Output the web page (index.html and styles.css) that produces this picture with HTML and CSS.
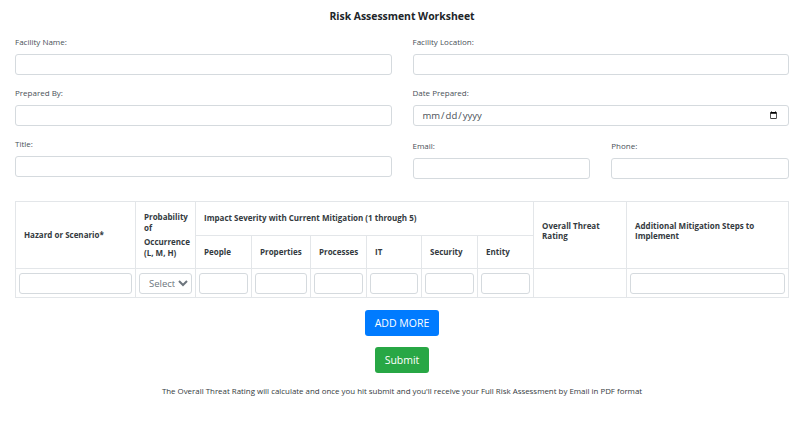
FILE: index.html
```html
<!DOCTYPE html>
<html lang="en">
<head>
    <meta charset="UTF-8">
    <meta name="viewport" content="width=device-width, initial-scale=1.0">
    <title>Risk Assessment Worksheet</title>
    <link rel="stylesheet" href="styles.css">
</head>
<body>
    <div class="container">
        <h1 class="page-title">Risk Assessment Worksheet</h1>

        <div class="form-grid">
            <div class="field">
                <label>Facility Name:</label>
                <input type="text">
            </div>
            <div class="field">
                <label>Facility Location:</label>
                <input type="text">
            </div>
            <div class="field">
                <label>Prepared By:</label>
                <input type="text">
            </div>
            <div class="field">
                <label>Date Prepared:</label>
                <input type="date">
            </div>
            <div class="field">
                <label>Title:</label>
                <input type="text">
            </div>
            <div class="split shifted">
                <div class="field">
                    <label>Email:</label>
                    <input type="email">
                </div>
                <div class="field">
                    <label>Phone:</label>
                    <input type="tel">
                </div>
            </div>
        </div>

        <table class="risk-table">
            <colgroup>
                <col style="width: 120px">
                <col style="width: 60px">
                <col style="width: 56px">
                <col style="width: 59px">
                <col style="width: 56px">
                <col style="width: 55px">
                <col style="width: 56px">
                <col style="width: 56px">
                <col style="width: 93px">
                <col>
            </colgroup>
            <thead>
                <tr>
                    <th rowspan="2">Hazard or Scenario*</th>
                    <th rowspan="2">Probability of<span class="sub">Occurrence (L, M, H)</span></th>
                    <th colspan="6">Impact Severity with Current Mitigation (1 through 5)</th>
                    <th rowspan="2" class="top">Overall Threat Rating</th>
                    <th rowspan="2" class="top">Additional Mitigation Steps to Implement</th>
                </tr>
                <tr>
                    <th>People</th>
                    <th>Properties</th>
                    <th>Processes</th>
                    <th>IT</th>
                    <th>Security</th>
                    <th>Entity</th>
                </tr>
            </thead>
            <tbody>
                <tr>
                    <td><input type="text"></td>
                    <td>
                        <select>
                            <option>Select</option>
                            <option>L</option>
                            <option>M</option>
                            <option>H</option>
                        </select>
                    </td>
                    <td><input type="text"></td>
                    <td><input type="text"></td>
                    <td><input type="text"></td>
                    <td><input type="text"></td>
                    <td><input type="text"></td>
                    <td><input type="text"></td>
                    <td></td>
                    <td><input type="text"></td>
                </tr>
            </tbody>
        </table>

        <div class="actions">
            <button type="button" class="btn btn-primary">ADD MORE</button>
            <button type="submit" class="btn btn-success">Submit</button>
        </div>

        <p class="note">The Overall Threat Rating will calculate and once you hit submit and you'll receive your Full Risk Assessment by Email in PDF format</p>
    </div>
</body>
</html>
```

FILE: styles.css
```css
* { box-sizing: border-box; }
body { margin: 0; font-family: "Open Sans", "Noto Sans", Arial, sans-serif; color: #212529; background: #fff; }
.container { padding: 8px 11px 0 15px; }
.page-title { margin: 0 0 12px; font-size: 10.4px; line-height: 16px; font-weight: 700; text-align: center; color: #212529; }

.form-grid { display: grid; grid-template-columns: 1fr 1fr; column-gap: 21px; row-gap: 12px; }
.field { display: flex; flex-direction: column; }
.field label { font-size: 8px; line-height: 12px; color: #495057; margin-bottom: 6px; }
.field input { height: 21px; width: 100%; border: 1px solid #d5dade; border-radius: 3px; padding: 0 8px; font: inherit; font-size: 9.5px; color: #495057; background: #fff; }
.split { display: grid; grid-template-columns: 1fr 1fr; column-gap: 21px; }
.shifted { margin-top: 2px; }

.risk-table { width: 774px; margin-top: 22px; border-collapse: collapse; table-layout: fixed; }
.risk-table th, .risk-table td { border: 1px solid #e3e6e9; vertical-align: middle; }
.risk-table th { padding: 4px 8px; font-size: 8px; line-height: 10.5px; font-weight: 700; text-align: left; color: #343a40; }
.risk-table thead tr:first-child th { height: 34px; }
.risk-table thead tr:nth-child(2) th { height: 33px; }
.risk-table th.top { padding-bottom: 12px; }
.risk-table th .sub { display: block; margin-top: 4px; }
.risk-table td { padding: 3px 3px; height: 29px; line-height: 1; }
.risk-table td input { display: block; width: 100%; height: 21px; border: 1px solid #d5dade; border-radius: 3px; padding: 0 4px; font: inherit; font-size: 9.5px; }
.risk-table td select { display: block; width: 100%; height: 21px; border: 1px solid #d5dade; border-radius: 3px; padding: 0 0 0 5px; font: inherit; font-size: 9.5px; color: #6c757d; background: #fff; }

.actions { display: flex; flex-direction: column; align-items: center; gap: 11px; margin-top: 12px; }
.btn { border: none; border-radius: 3px; color: #fff; font: inherit; font-size: 10.5px; height: 26px; padding: 0 10px; cursor: pointer; }
.btn-primary { background: #007bff; }
.btn-primary:hover { background: #0069d9; }
.btn-success { background: #28a745; }
.btn-success:hover { background: #218838; }

.note { margin: 12px 0 0; font-size: 7.9px; line-height: 12px; text-align: center; color: #343a40; }
```
